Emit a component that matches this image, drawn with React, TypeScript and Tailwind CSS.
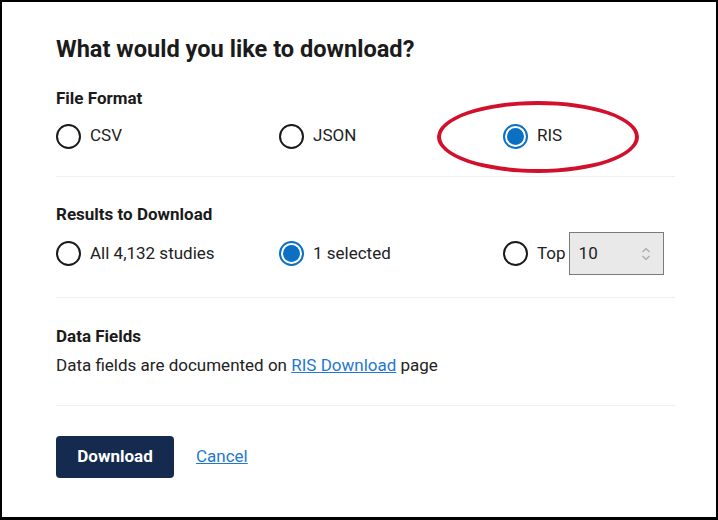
import React from "react";

function Radio({ checked, label }: { checked?: boolean; label: string }) {
  return (
    <label className="flex items-center gap-[9px]">
      {checked ? (
        <span className="flex h-[25px] w-[25px] items-center justify-center rounded-full border-2 border-[#0b6fc4]">
          <span className="h-[17px] w-[17px] rounded-full bg-[#0b6fc4]" />
        </span>
      ) : (
        <span className="h-[25px] w-[25px] rounded-full border-2 border-[#1a1a1a]" />
      )}
      <span className="text-[17px] text-[#222]">{label}</span>
    </label>
  );
}

export default function App() {
  return (
    <div
      className="relative h-[520px] w-[718px] border-2 border-b-[3px] border-black bg-white"
      style={{ fontFamily: "Roboto, 'Liberation Sans', sans-serif" }}
    >
      <div className="pl-[54px] pr-[41px] pt-[33px]">
        <h1 className="text-[23.6px] font-bold leading-[28px] text-[#1b1b1b]">
          What would you like to download?
        </h1>

        {/* File format */}
        <div className="mt-[23px] text-[17px] font-bold leading-[24px] text-[#1b1b1b]">File Format</div>
        <div className="mt-[12px] grid h-[28px] grid-cols-[223px_224px_1fr] items-center">
          <Radio label="CSV" />
          <Radio label="JSON" />
          <Radio label="RIS" checked />
        </div>
        <div className="mt-[26px] h-px bg-[#efefef]" />

        {/* Results */}
        <div className="mt-[25px] text-[17px] font-bold leading-[24px] text-[#1b1b1b]">Results to Download</div>
        <div className="mt-[6px] grid h-[43px] grid-cols-[223px_224px_1fr] items-center">
          <Radio label="All 4,132 studies" />
          <Radio label="1 selected" checked />
          <div className="flex items-center">
            <Radio label="Top" />
            <div className="ml-[3px] flex h-[43px] w-[95px] items-center justify-between border border-[#7b7b7b] bg-[#e9e9e9] pl-[9px] pr-[12px]">
              <span className="text-[17px] text-[#222]">10</span>
              <svg width="10" height="16" viewBox="0 0 10 16" fill="none" stroke="#a8a8a8" strokeWidth="1.2">
                <path d="M1.5 6 L5 2.5 L8.5 6" />
                <path d="M1.5 10 L5 13.5 L8.5 10" />
              </svg>
            </div>
          </div>
        </div>
        <div className="mt-[22px] h-px bg-[#efefef]" />

        {/* Data fields */}
        <div className="mt-[26px] text-[17px] font-bold leading-[24px] text-[#1b1b1b]">Data Fields</div>
        <p className="mt-[5px] text-[17px] leading-[24px] text-[#222]">
          Data fields are documented on{" "}
          <a href="#" className="text-[#1f78d1] underline">
            RIS Download
          </a>{" "}
          page
        </p>
        <div className="mt-[28px] h-px bg-[#efefef]" />

        <div className="mt-[30px] flex items-center gap-[22px]">
          <button className="h-[42px] w-[118px] rounded-[4px] bg-[#142a4f] text-[17px] font-bold text-white">
            Download
          </button>
          <a href="#" className="text-[17px] text-[#1f78d1] underline">
            Cancel
          </a>
        </div>
      </div>

      {/* highlight around RIS */}
      <div className="pointer-events-none absolute left-[435px] top-[99px] h-[72px] w-[202px] rounded-[50%] border-[4px] border-[#d3102b]" />
    </div>
  );
}
